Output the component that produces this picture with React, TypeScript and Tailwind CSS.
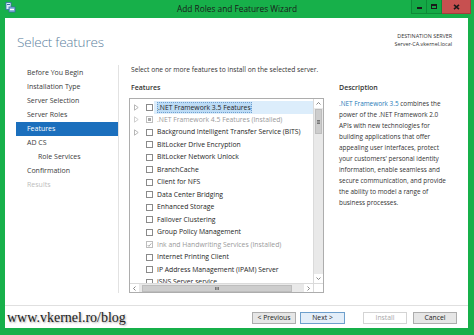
import React from "react";

type Row = {
  label: string;
  arrow?: boolean;
  state?: "none" | "partial" | "checked";
  installed?: boolean;
  selected?: boolean;
};

const ROWS: Row[] = [
  { label: ".NET Framework 3.5 Features", arrow: true, selected: true },
  { label: ".NET Framework 4.5 Features (Installed)", arrow: true, state: "partial", installed: true },
  { label: "Background Intelligent Transfer Service (BITS)", arrow: true },
  { label: "BitLocker Drive Encryption" },
  { label: "BitLocker Network Unlock" },
  { label: "BranchCache" },
  { label: "Client for NFS" },
  { label: "Data Center Bridging" },
  { label: "Enhanced Storage" },
  { label: "Failover Clustering" },
  { label: "Group Policy Management" },
  { label: "Ink and Handwriting Services (Installed)", state: "checked", installed: true },
  { label: "Internet Printing Client" },
  { label: "IP Address Management (IPAM) Server" },
  { label: "iSNS Server service" },
];

const NAV = [
  { label: "Before You Begin" },
  { label: "Installation Type" },
  { label: "Server Selection" },
  { label: "Server Roles" },
  { label: "Features", active: true },
  { label: "AD CS" },
  { label: "Role Services", indent: true },
  { label: "Confirmation" },
  { label: "Results", disabled: true },
];

const DESC_LINES = [
  "power of the .NET Framework 2.0",
  "APIs with new technologies for",
  "building applications that offer",
  "appealing user interfaces, protect",
  "your customers' personal identity",
  "information, enable seamless and",
  "secure communication, and provide",
  "the ability to model a range of",
  "business processes.",
];

const AppIcon = () => (
  <svg width="11" height="11" viewBox="0 0 11 11">
    <rect x="1" y="0.5" width="5" height="7" fill="#d9ecfa" stroke="#3b6fa8" strokeWidth="0.8" />
    <rect x="2" y="2" width="3" height="1" fill="#3b6fa8" />
    <rect x="4" y="5" width="6" height="5" fill="#8fb7e0" stroke="#3b6fa8" strokeWidth="0.8" />
    <rect x="5" y="7" width="4" height="1" fill="#ffffff" />
  </svg>
);

const Arrow = ({ faded }: { faded?: boolean }) => (
  <svg width="5" height="7" viewBox="0 0 5 7">
    <path d="M0.5 0.8 L4.2 3.5 L0.5 6.2 Z" fill="none" stroke={faded ? "#c4c4c4" : "#a6a6a6"} strokeWidth="0.8" />
  </svg>
);

const Checkbox = ({ state, installed }: { state?: Row["state"]; installed?: boolean }) => (
  <div
    className={`w-[7px] h-[7px] shrink-0 border bg-white flex items-center justify-center ${
      installed ? "border-[#bdbdbd]" : "border-[#8a8a8a]"
    }`}
  >
    {state === "partial" && <div className="w-[3px] h-[3px] bg-[#a8a8a8]" />}
    {state === "checked" && (
      <svg width="6" height="6" viewBox="0 0 6 6">
        <path d="M0.8 3 L2.3 4.6 L5.2 1" fill="none" stroke="#9a9a9a" strokeWidth="1" />
      </svg>
    )}
  </div>
);

function FeatureRow({ row }: { row: Row }) {
  return (
    <div className="h-[12.5px] flex items-center shrink-0">
      <div className="w-[6px] ml-[3px] flex justify-center">{row.arrow && <Arrow faded={row.installed} />}</div>
      <div className="ml-[7px]">
        <Checkbox state={row.state} installed={row.installed} />
      </div>
      {row.selected ? (
        <div className="ml-[1px] flex-1 h-full bg-[#dcedfb] flex items-center pl-[3px]">
          <span className="bg-[#bcdbf5] border border-dotted border-[#6f9fcf] leading-[9px] text-[#1e1e1e] whitespace-nowrap">
            {row.label}
          </span>
        </div>
      ) : (
        <span className={`ml-[4px] whitespace-nowrap ${row.installed ? "text-[#9a9a9a]" : "text-[#1e1e1e]"}`}>
          {row.label}
        </span>
      )}
    </div>
  );
}

function ListBox() {
  return (
    <div className="mt-[5px] w-[195px] h-[195px] border border-[#adadad] grid grid-cols-[183px_10px] grid-rows-[184px_9px] text-[6.8px]">
      <div className="overflow-hidden flex flex-col pt-[2px]">
        {ROWS.map((r, i) => (
          <FeatureRow key={i} row={r} />
        ))}
      </div>
      {/* vertical scrollbar */}
      <div className="bg-[#e9e9e9] border-l border-[#dadada] flex flex-col">
        <div className="h-[9px] bg-white flex items-center justify-center text-[6px] leading-none text-[#777]">
          <svg width="5" height="3" viewBox="0 0 5 3">
            <path d="M0.5 2.5 L2.5 0.5 L4.5 2.5" fill="none" stroke="#6a6a6a" strokeWidth="0.8" />
          </svg>
        </div>
        <div className="mt-[1px] mx-[1px] h-[25px] bg-[#cdcdcd] border border-[#bdbdbd] flex items-center justify-center">
          <div className="w-[3px] h-[4px] border-y border-[#777] bg-[#999]" />
        </div>
        <div className="flex-1" />
        <div className="h-[9px] bg-white flex items-center justify-center">
          <svg width="5" height="3" viewBox="0 0 5 3">
            <path d="M0.5 0.5 L2.5 2.5 L4.5 0.5" fill="none" stroke="#6a6a6a" strokeWidth="0.8" />
          </svg>
        </div>
      </div>
      {/* horizontal scrollbar */}
      <div className="bg-[#e9e9e9] border-t border-[#dadada] flex items-stretch">
        <div className="w-[9px] bg-white flex items-center justify-center">
          <svg width="3" height="5" viewBox="0 0 3 5">
            <path d="M2.5 0.5 L0.5 2.5 L2.5 4.5" fill="none" stroke="#6a6a6a" strokeWidth="0.8" />
          </svg>
        </div>
        <div className="flex-1 flex items-center">
          <div className="ml-[3px] w-[150px] h-[7px] bg-[#cdcdcd] border border-[#bdbdbd] flex items-center justify-center">
            <div className="w-[4px] h-[3px] border-x border-[#777] bg-[#999]" />
          </div>
        </div>
        <div className="w-[9px] bg-white flex items-center justify-center">
          <svg width="3" height="5" viewBox="0 0 3 5">
            <path d="M0.5 0.5 L2.5 2.5 L0.5 4.5" fill="none" stroke="#6a6a6a" strokeWidth="0.8" />
          </svg>
        </div>
      </div>
      <div className="bg-white border-t border-l border-[#dadada]" />
    </div>
  );
}

function WizardButton({
  label,
  kind = "normal",
  className = "",
}: {
  label: string;
  kind?: "normal" | "default" | "disabled";
  className?: string;
}) {
  const styles =
    kind === "default"
      ? "bg-[#e3eef9] border-[#6d9fcc] text-[#222]"
      : kind === "disabled"
      ? "bg-white border-[#d4d4d4] text-[#a8a8a8]"
      : "bg-[#e6e6e6] border-[#adadad] text-[#222]";
  return (
    <div className={`h-[12px] border flex items-center justify-center text-[6.8px] leading-none ${styles} ${className}`}>
      {label}
    </div>
  );
}

export default function App() {
  return (
    <div className="w-[474px] h-[335px] bg-[#17b04a] flex flex-col overflow-hidden font-['Segoe_UI','Open_Sans',sans-serif]">
      {/* title bar */}
      <div className="h-[18px] grid grid-cols-[1fr_auto_1fr] shrink-0">
        <div className="pl-[5px] pt-[2px]">
          <AppIcon />
        </div>
        <div className="text-[8.3px] leading-[18px] text-[#1a1a1a]">Add Roles and Features Wizard</div>
        <div className="flex justify-end pr-[3px]">
          <div className="w-[16px] h-[14px] border-r border-b border-l border-[#0e8a38] bg-[#14a845] flex items-end justify-center pb-[4px]">
            <div className="w-[5px] h-[2px] bg-[#1a1a1a]" />
          </div>
          <div className="w-[15px] h-[14px] border-r border-b border-[#0e8a38] bg-[#14a845] flex items-center justify-center">
            <div className="w-[6px] h-[5px] border-[1.5px] border-[#1a1a1a] border-t-[2px]" />
          </div>
          <div className="w-[29px] h-[14px] bg-[#c75050] border-b border-r border-[#a33c3c] flex items-center justify-center">
            <svg width="7" height="6" viewBox="0 0 7 6">
              <path d="M1 0.8 L6 5.2 M6 0.8 L1 5.2" stroke="#1a1a1a" strokeWidth="1.6" />
            </svg>
          </div>
        </div>
      </div>

      {/* window body */}
      <div className="ml-[5px] mr-[6px] h-[310px] bg-white flex flex-col shrink-0">
        {/* header */}
        <div className="h-[44px] flex justify-between shrink-0">
          <div className="pl-[12px] pt-[14px] text-[13.5px] leading-[20px] font-light text-[#5d7f9e] tracking-[-0.2px]">
            Select features
          </div>
          <div className="pr-[16px] pt-[14px] text-right text-[5.4px] leading-[8px] text-[#333]">
            <div>DESTINATION SERVER</div>
            <div>Server-CA.vkernel.local</div>
          </div>
        </div>

        {/* content */}
        <div className="h-[243px] flex shrink-0">
          <div className="w-[114px] pt-[3px] shrink-0">
            <div className="h-[228px] border-r border-[#e2e2e2] pl-[11px] pt-[1px]">
              {NAV.map((n) => (
                <div
                  key={n.label}
                  className={`h-[14px] flex items-center text-[7px] ${n.indent ? "pl-[22px]" : "pl-[11px]"} ${
                    n.active ? "bg-[#1b6fbd] text-white" : n.disabled ? "text-[#bcbcbc]" : "text-[#3a3a3a]"
                  }`}
                >
                  {n.label}
                </div>
              ))}
            </div>
          </div>

          <div className="flex-1 pl-[10px] pt-[3px]">
            <div className="pl-[2px] text-[6.7px] leading-[10px] text-[#333]">
              Select one or more features to install on the selected server.
            </div>
            <div className="mt-[8px] flex gap-[15px]">
              <div className="w-[195px]">
                <div className="pl-[2px] text-[7px] leading-[10px] font-semibold text-[#333]">Features</div>
                <ListBox />
              </div>
              <div className="w-[126px]">
                <div className="text-[7px] leading-[10px] font-semibold text-[#333]">Description</div>
                <div className="mt-[4.5px] text-[6.4px] leading-[11px] text-[#333] whitespace-nowrap">
                  <div>
                    <span className="text-[#1f7bb8]">.NET Framework 3.5</span> combines the
                  </div>
                  {DESC_LINES.map((l) => (
                    <div key={l}>{l}</div>
                  ))}
                </div>
              </div>
            </div>
          </div>
        </div>

        {/* footer */}
        <div className="flex-1 border-t border-[#e0e0e0] flex justify-between">
          <div className="pl-[2px] mt-[4px] h-[16px] font-['Liberation_Serif',serif] text-[14px] leading-[16px] text-[#1c1c1c] [text-shadow:1px_1px_2px_rgba(0,0,0,0.35)]">
            www.vkernel.ro/blog
          </div>
          <div className="flex pt-[6px] pr-[11px]">
            <WizardButton label="< Previous" className="w-[44px]" />
            <WizardButton label="Next >" kind="default" className="w-[45px] ml-[4px]" />
            <WizardButton label="Install" kind="disabled" className="w-[44px] ml-[18px]" />
            <WizardButton label="Cancel" className="w-[44px] ml-[6px]" />
          </div>
        </div>
      </div>
    </div>
  );
}
